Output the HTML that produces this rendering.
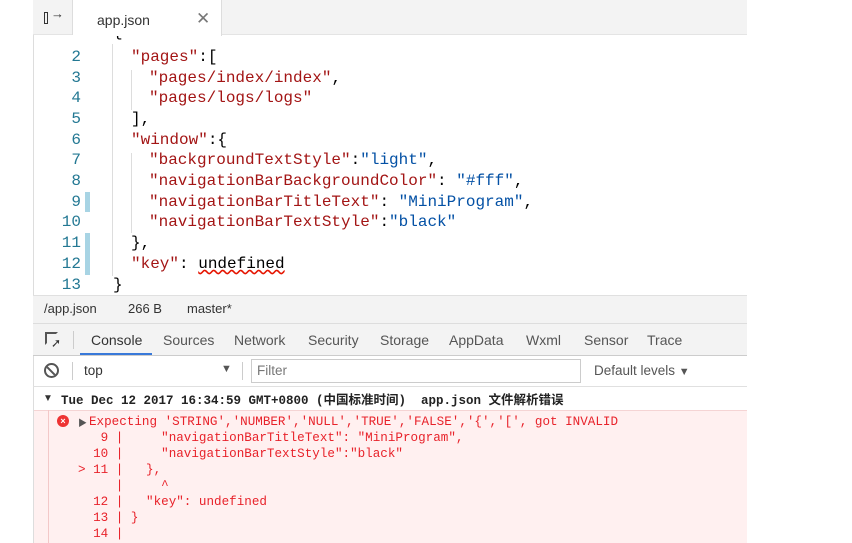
<!DOCTYPE html>
<html><head><meta charset="utf-8"><style>
*{margin:0;padding:0;box-sizing:border-box}
body{width:852px;height:543px;background:#fff;position:relative;overflow:hidden;font-family:"Liberation Sans","Noto Sans CJK SC",sans-serif}
.a{position:absolute}
.code{font-family:"Liberation Mono",monospace;font-size:16px;white-space:pre;line-height:20px}
.ln{color:#237893;width:50px;text-align:right;left:31px}
.k{color:#a31515}.v{color:#0451a5}.p{color:#000}
.tab{position:absolute;top:332px;font-size:14px;color:#555}
.m{font-family:"Liberation Mono","Noto Sans CJK SC",monospace;font-size:12.6px;white-space:pre;color:#e8222a;line-height:16px}
</style></head><body>
<div class="a" style="left:33px;top:0;width:714px;height:543px;border-left:1px solid #ddd"></div>
<!-- tab bar -->
<div class="a" style="left:33px;top:0;width:714px;height:35px;background:#f3f3f3;border-bottom:1px solid #e4e4e4"></div>
<div class="a" style="left:33px;top:0;width:40px;height:35px;border-right:1px solid #ddd"></div>
<div class="a" style="left:44px;top:12px;width:4px;height:12px;border:1.5px solid #333"></div>
<div class="a" style="left:51px;top:6px;font-size:13px;color:#333">→</div>
<div class="a" style="left:73px;top:0;width:149px;height:36px;background:#fff;border-right:1px solid #ddd"></div>
<div class="a" style="left:97px;top:12px;font-size:14px;color:#333">app.json</div>
<div class="a" style="left:196px;top:9px;font-size:17px;color:#777">✕</div>
<!-- code -->
<div class="a" style="left:112px;top:44px;width:1px;height:232px;background:#ddd"></div>
<div class="a" style="left:131px;top:70px;width:1px;height:40px;background:#ddd"></div>
<div class="a" style="left:131px;top:153px;width:1px;height:80px;background:#ddd"></div>
<div class="a" style="left:85px;top:192px;width:5px;height:20px;background:#a8d4e4"></div>
<div class="a" style="left:85px;top:233px;width:5px;height:42px;background:#a8d4e4"></div>
<div class="a code" style="left:0;top:36px;height:6px;overflow:hidden;width:747px"><div style="position:relative;top:-14px;height:20px"><span class="a ln" style="top:0">1</span><span class="a" style="left:113px">{</span></div></div>
<div class="a code ln" style="top:47px">2</div><div class="a code" style="left:131px;top:47px"><span class="k">"pages"</span>:[</div>
<div class="a code ln" style="top:68px">3</div><div class="a code" style="left:149px;top:68px"><span class="k">"pages/index/index"</span>,</div>
<div class="a code ln" style="top:88px">4</div><div class="a code" style="left:149px;top:88px"><span class="k">"pages/logs/logs"</span></div>
<div class="a code ln" style="top:109px">5</div><div class="a code" style="left:131px;top:109px">],</div>
<div class="a code ln" style="top:130px">6</div><div class="a code" style="left:131px;top:130px"><span class="k">"window"</span>:{</div>
<div class="a code ln" style="top:150px">7</div><div class="a code" style="left:149px;top:150px"><span class="k">"backgroundTextStyle"</span>:<span class="v">"light"</span>,</div>
<div class="a code ln" style="top:171px">8</div><div class="a code" style="left:149px;top:171px"><span class="k">"navigationBarBackgroundColor"</span>: <span class="v">"#fff"</span>,</div>
<div class="a code ln" style="top:192px">9</div><div class="a code" style="left:149px;top:192px"><span class="k">"navigationBarTitleText"</span>: <span class="v">"MiniProgram"</span>,</div>
<div class="a code ln" style="top:212px">10</div><div class="a code" style="left:149px;top:212px"><span class="k">"navigationBarTextStyle"</span>:<span class="v">"black"</span></div>
<div class="a code ln" style="top:233px">11</div><div class="a code" style="left:131px;top:233px">},</div>
<div class="a code ln" style="top:254px">12</div><div class="a code" style="left:131px;top:254px"><span class="k">"key"</span>: <span style="text-decoration:underline wavy #e51400">undefined</span></div>
<div class="a code ln" style="top:275px">13</div><div class="a code" style="left:113px;top:275px">}</div>
<!-- status -->
<div class="a" style="left:33px;top:295px;width:714px;height:29px;background:#f3f3f3;border-top:1px solid #e0e0e0;border-bottom:1px solid #ddd"></div>
<div class="a" style="left:44px;top:301px;font-size:13px;color:#333">/app.json</div>
<div class="a" style="left:128px;top:301px;font-size:13px;color:#333">266 B</div>
<div class="a" style="left:187px;top:301px;font-size:13px;color:#333">master*</div>
<!-- devtools tabs -->
<div class="a" style="left:33px;top:324px;width:714px;height:32px;background:#f3f3f3;border-bottom:1px solid #ccc"></div>
<div class="a" style="left:45px;top:332px;width:13px;height:13px;border:2px solid #555;border-right-color:transparent;border-bottom-color:transparent"></div>
<div class="a" style="left:51px;top:336px;font-size:12px;color:#333">➚</div>
<div class="a" style="left:73px;top:331px;width:1px;height:18px;background:#ccc"></div>
<div class="a" style="left:80px;top:353px;width:72px;height:2px;background:#3879d9"></div>
<div class="tab" style="left:91px;color:#333">Console</div>
<div class="tab" style="left:163px">Sources</div>
<div class="tab" style="left:234px">Network</div>
<div class="tab" style="left:308px">Security</div>
<div class="tab" style="left:380px">Storage</div>
<div class="tab" style="left:449px">AppData</div>
<div class="tab" style="left:526px">Wxml</div>
<div class="tab" style="left:584px">Sensor</div>
<div class="tab" style="left:647px">Trace</div>
<!-- filter row -->
<div class="a" style="left:33px;top:356px;width:714px;height:31px;border-bottom:1px solid #e0e0e0"></div>
<div class="a" style="left:44px;top:363px;width:15px;height:15px;border:2px solid #555;border-radius:50%;overflow:hidden"><div style="position:absolute;left:4px;top:-2px;width:2px;height:16px;background:#555;transform:rotate(-45deg)"></div></div>
<div class="a" style="left:72px;top:362px;width:1px;height:18px;background:#ccc"></div>
<div class="a" style="left:84px;top:363px;font-size:13.5px;color:#333">top</div>
<div class="a" style="left:221px;top:363px;font-size:11px;color:#555">▼</div>
<div class="a" style="left:242px;top:362px;width:1px;height:18px;background:#ccc"></div>
<div class="a" style="left:251px;top:359px;width:330px;height:24px;border:1px solid #ccc"></div>
<div class="a" style="left:257px;top:363px;font-size:13.5px;color:#777">Filter</div>
<div class="a" style="left:594px;top:363px;font-size:13.5px;color:#555">Default levels <span style="font-size:11px">▼</span></div>
<!-- console -->
<div class="a" style="left:43px;top:393px;font-size:10px;color:#333">▼</div>
<div class="a m" style="left:61px;top:393px;color:#222;font-weight:bold;font-size:12.5px">Tue Dec 12 2017 16:34:59 GMT+0800 (中国标准时间)  app.json 文件解析错误</div>
<div class="a" style="left:34px;top:410px;width:713px;height:133px;background:#fff0f0;border-top:1px solid #f5d4d4"></div>
<div class="a" style="left:48px;top:410px;width:1px;height:133px;background:#f3c8c8"></div>
<div class="a" style="left:57px;top:415px;width:12px;height:12px;border-radius:50%;background:#e33;color:#fff;font-size:9px;line-height:12px;text-align:center;font-weight:bold">×</div>
<div class="a" style="left:78px;top:416px;font-size:9px;color:#555">▶</div>
<div class="a m" style="left:89px;top:414px">Expecting 'STRING','NUMBER','NULL','TRUE','FALSE','{','[', got INVALID</div>
<div class="a m" style="left:78px;top:430px">   9 |     "navigationBarTitleText": "MiniProgram",
  10 |     "navigationBarTextStyle":"black"
&gt; 11 |   },
     |     ^
  12 |   "key": undefined
  13 | }
  14 |</div>
</body></html>
